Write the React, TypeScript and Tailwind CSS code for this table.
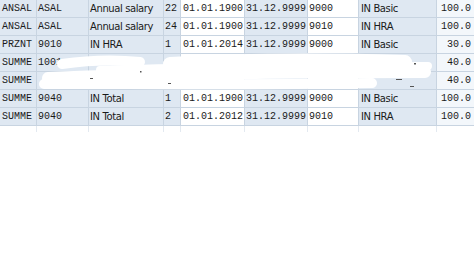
import React from "react";

type Row = {
  kind: string;
  code: string;
  text: string;
  seq: string;
  from: string;
  to: string;
  wt: string;
  wtText: string;
  amount: string;
};

const rows: Row[] = [
  { kind: "ANSAL", code: "ASAL", text: "Annual salary", seq: "22", from: "01.01.1900", to: "31.12.9999", wt: "9000", wtText: "IN Basic", amount: "100.0" },
  { kind: "ANSAL", code: "ASAL", text: "Annual salary", seq: "24", from: "01.01.1900", to: "31.12.9999", wt: "9010", wtText: "IN HRA", amount: "100.0" },
  { kind: "PRZNT", code: "9010", text: "IN HRA", seq: "1", from: "01.01.2014", to: "31.12.9999", wt: "9000", wtText: "IN Basic", amount: "30.0" },
  { kind: "SUMME", code: "1001", text: "", seq: "", from: "", to: "", wt: "", wtText: "", amount: "40.0" },
  { kind: "SUMME", code: "", text: "", seq: "", from: "", to: "", wt: "", wtText: "", amount: "40.0" },
  { kind: "SUMME", code: "9040", text: "IN Total", seq: "1", from: "01.01.1900", to: "31.12.9999", wt: "9000", wtText: "IN Basic", amount: "100.0" },
  { kind: "SUMME", code: "9040", text: "IN Total", seq: "2", from: "01.01.2012", to: "31.12.9999", wt: "9010", wtText: "IN HRA", amount: "100.0" },
];

const mono = "font-['Liberation_Mono',monospace] text-[10px]";
const sans = "font-['DejaVu_Sans',sans-serif] text-[10px] tracking-[-0.4px]";
const cell = "h-[18px] flex items-center border-r border-b border-[#c8d4e1] text-[#1a1a1a] whitespace-nowrap overflow-hidden";
const blue = "bg-[#dfe8f2]";
const white = "bg-white";

function TableRow({ r }: { r: Row }) {
  return (
    <>
      <div className={`${cell} ${blue} ${mono} pl-[2px]`}>{r.kind}</div>
      <div className={`${cell} ${blue} ${mono} pl-[1px]`}>{r.code}</div>
      <div className={`${cell} ${blue} ${sans} pl-[1px]`}>{r.text}</div>
      <div className={`${cell} ${blue} ${mono} pl-[1px]`}>{r.seq}</div>
      <div className={`${cell} ${white} ${mono} pl-[2px]`}>{r.from}</div>
      <div className={`${cell} ${blue} ${mono} pl-[1px]`}>{r.to}</div>
      <div className={`${cell} ${white} ${mono} pl-[1px]`}>{r.wt}</div>
      <div className={`${cell} ${blue} ${sans} pl-[2px]`}>{r.wtText}</div>
      <div className={`${cell} bg-[#f3f7fb] ${mono} justify-end pr-[3px] border-r-0`}>{r.amount}</div>
    </>
  );
}

export default function App() {
  return (
    <div className="w-[474px] h-[268px] bg-white overflow-hidden">
      <div className="relative">
        <div className="grid grid-cols-[37px_52px_75px_17px_64px_63px_51px_78px_37px]">
          {rows.map((r, i) => (
            <TableRow key={i} r={r} />
          ))}
          {Array.from({ length: 9 }).map((_, i) => (
            <div key={i} className={`h-[6px] ${i < 8 ? "border-r border-[#e3e9f0]" : ""}`} />
          ))}
        </div>

        {/* redaction scribble */}
        <svg className="absolute left-0 top-0" width="474" height="100" viewBox="0 0 474 100">
          <g fill="none" stroke="#ffffff" strokeLinecap="round" strokeLinejoin="round">
            <path d="M62 64 C 90 60, 120 60, 140 62" strokeWidth="10" />
            <path d="M170 64 C 240 60, 330 60, 405 62" strokeWidth="14" />
            <path d="M100 70 C 200 66, 320 66, 428 66" strokeWidth="8" />
            <path d="M48 78 C 150 74, 300 72, 425 72" strokeWidth="12" />
            <path d="M44 84 C 150 84, 270 85, 372 83" strokeWidth="10" />
          </g>
          <g fill="#555">
            <rect x="140" y="71" width="1.5" height="1.5" />
            <rect x="414" y="63" width="2" height="1.5" />
            <rect x="396" y="79" width="6" height="1" />
            <rect x="410" y="86" width="4" height="1" />
            <rect x="168" y="83" width="3" height="1" />
            <rect x="90" y="78" width="3" height="1" />
          </g>
        </svg>
      </div>
    </div>
  );
}
